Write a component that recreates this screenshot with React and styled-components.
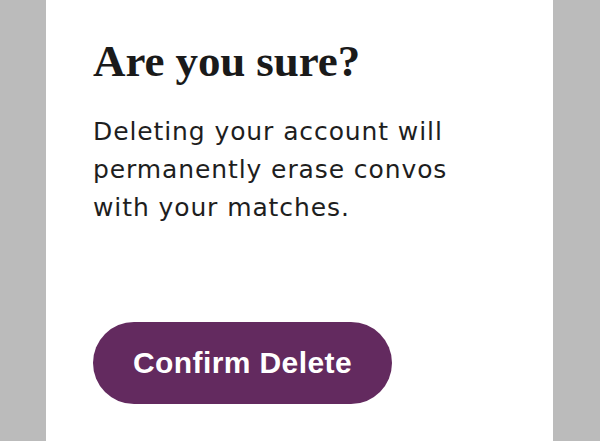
import React from "react";
import styled, { createGlobalStyle } from "styled-components";

const GlobalStyle = createGlobalStyle`
  html, body {
    margin: 0;
    padding: 0;
    background: #bbbbbb;
  }
  #root {
    min-height: 100vh;
  }
`;

const Backdrop = styled.div`
  display: flex;
  justify-content: center;
  min-height: 100vh;
  background: #bbbbbb;
`;

const Sheet = styled.div`
  box-sizing: border-box;
  width: 507px;
  min-height: 100vh;
  margin-right: 1px;
  background: #ffffff;
  padding: 34px 47px 0 47px;
  display: flex;
  flex-direction: column;
  align-items: flex-start;
`;

const Title = styled.h1`
  margin: 0;
  font-family: "Liberation Serif", "DejaVu Serif", serif;
  font-weight: 700;
  font-size: 45px;
  line-height: 54px;
  letter-spacing: -0.1px;
  color: #1a1a1a;
`;

const Message = styled.p`
  margin: 25px 0 0 0;
  font-family: "DejaVu Sans", "Open Sans", sans-serif;
  font-size: 25px;
  line-height: 38px;
  letter-spacing: 0.9px;
  color: #1e1e1e;
  max-width: 410px;
`;

const ConfirmButton = styled.button`
  margin-top: 95px;
  height: 82px;
  padding: 0 40px;
  border: none;
  border-radius: 41px;
  background: #632a5f;
  color: #ffffff;
  font-family: "Liberation Sans", Arial, sans-serif;
  font-weight: 700;
  font-size: 30px;
  letter-spacing: 0.4px;
  cursor: pointer;
`;

const App = () => {
  return (
    <>
      <GlobalStyle />
      <Backdrop>
        <Sheet>
          <Title>Are you sure?</Title>
          <Message>
            Deleting your account will
            <br />
            permanently erase convos
            <br />
            with your matches.
          </Message>
          <ConfirmButton>Confirm Delete</ConfirmButton>
        </Sheet>
      </Backdrop>
    </>
  );
};

export default App;
